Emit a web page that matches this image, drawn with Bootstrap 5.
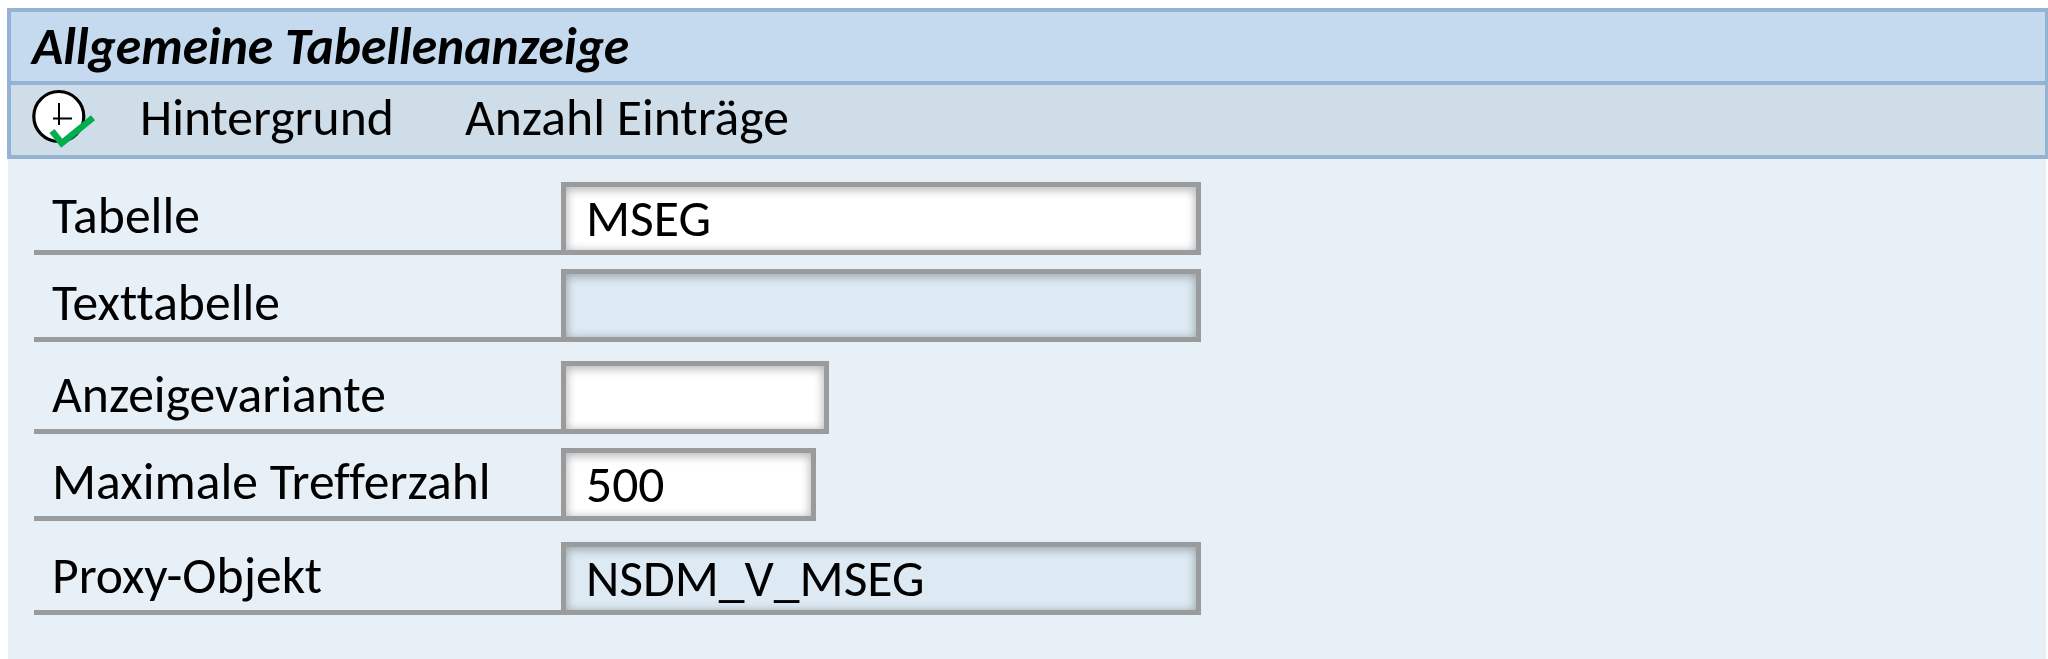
<!DOCTYPE html>
<html lang="de">
<head>
<meta charset="utf-8">
<meta name="viewport" content="width=device-width, initial-scale=1">
<title>Allgemeine Tabellenanzeige</title>
<link href="https://cdn.jsdelivr.net/npm/bootstrap@5.3.0/dist/css/bootstrap.min.css" rel="stylesheet">
<style>
  body {
    font-family: Calibri, Carlito, "Open Sans", sans-serif;
    font-size: 51.6px;
    line-height: 1;
    color: #000;
    font-variant-ligatures: none;
    background: #fff;
    overflow: hidden;
  }
  .screen { padding: 8px 0 0 7px; }
  .bar { border: 4px solid #94b2d1; border-right-width: 3px; white-space: nowrap; }
  .title-bar { height: 77px; background: #c5daee; padding-left: 21px; }
  .title-text { font-size: inherit; line-height: 1; }
  .tool-bar { height: 78px; margin-top: -4px; background: #cfdde8; padding-left: 21px; padding-bottom: 5px; }
  .tool-bar .btn-plain { font: inherit; line-height: 1; color: inherit; background: none; border: 0; padding: 0; }
  .exec { width: 64px; height: 62px; margin-top: 5px; }
  .exec svg { display: block; }
  .bg-btn { margin-left: 44px; }
  .count-btn { margin-left: 71px; }
  .form-area { height: 500px; margin: 0 2px 0 1px; background: #e8f0f7; padding: 23px 0 0 26px; }
  .field-row { height: 73px; }
  .field-label { width: 527px; padding-left: 18px; border-bottom: 5px solid #999b9c; }
  .form-control.field {
    width: 640px; height: 73px; border: 5px solid #999b9c; border-radius: 0;
    padding: 0 0 0 20px; font-size: inherit; line-height: 1; color: #000; background: #fff;
    font-variant-ligatures: none;
    box-shadow: inset 0 2px 10px 1px rgba(0, 0, 0, .29);
  }
  .form-control.locked { background: #ddeaf3; }
  .form-control.w-variant { width: 268px; }
  .form-control.w-hits { width: 255px; }
  .gap-a { margin-top: 14px; }
  .gap-b { margin-top: 19px; }
  .gap-c { margin-top: 21px; }
</style>
</head>
<body>
<main class="screen">
  <header class="bar title-bar d-flex align-items-center">
    <h1 class="m-0 fw-bold fst-italic title-text">Allgemeine Tabellenanzeige</h1>
  </header>
  <nav class="bar tool-bar d-flex align-items-center">
    <button class="btn-plain exec" type="button" aria-label="Ausführen">
      <svg width="64" height="62" viewBox="0 0 64 62" fill="none">
        <circle cx="26.8" cy="27.5" r="25" fill="#fff" stroke="#000" stroke-width="3.2"/>
        <path d="M27 14v22M21 29.5h19" stroke="#000" stroke-width="2"/>
        <path d="M20 42l9.7 12.3L61 28.7" stroke="#00ae50" stroke-width="6.4"/>
      </svg>
    </button>
    <button class="btn-plain bg-btn" type="button">Hintergrund</button>
    <button class="btn-plain count-btn" type="button">Anzahl Einträge</button>
  </nav>
  <form class="form-area">
    <div class="field-row d-flex">
      <label class="field-label d-flex align-items-center" for="f1">Tabelle</label>
      <input class="form-control field" id="f1" value="MSEG">
    </div>
    <div class="field-row d-flex gap-a">
      <label class="field-label d-flex align-items-center" for="f2">Texttabelle</label>
      <input class="form-control field locked" id="f2" readonly>
    </div>
    <div class="field-row d-flex gap-b">
      <label class="field-label d-flex align-items-center" for="f3">Anzeigevariante</label>
      <input class="form-control field w-variant" id="f3">
    </div>
    <div class="field-row d-flex gap-a">
      <label class="field-label d-flex align-items-center" for="f4">Maximale Trefferzahl</label>
      <input class="form-control field w-hits" id="f4" value="500">
    </div>
    <div class="field-row d-flex gap-c">
      <label class="field-label d-flex align-items-center" for="f5">Proxy-Objekt</label>
      <input class="form-control field locked" id="f5" value="NSDM_V_MSEG" readonly>
    </div>
  </form>
</main>
<script src="https://cdn.jsdelivr.net/npm/bootstrap@5.3.0/dist/js/bootstrap.bundle.min.js"></script>
</body>
</html>
